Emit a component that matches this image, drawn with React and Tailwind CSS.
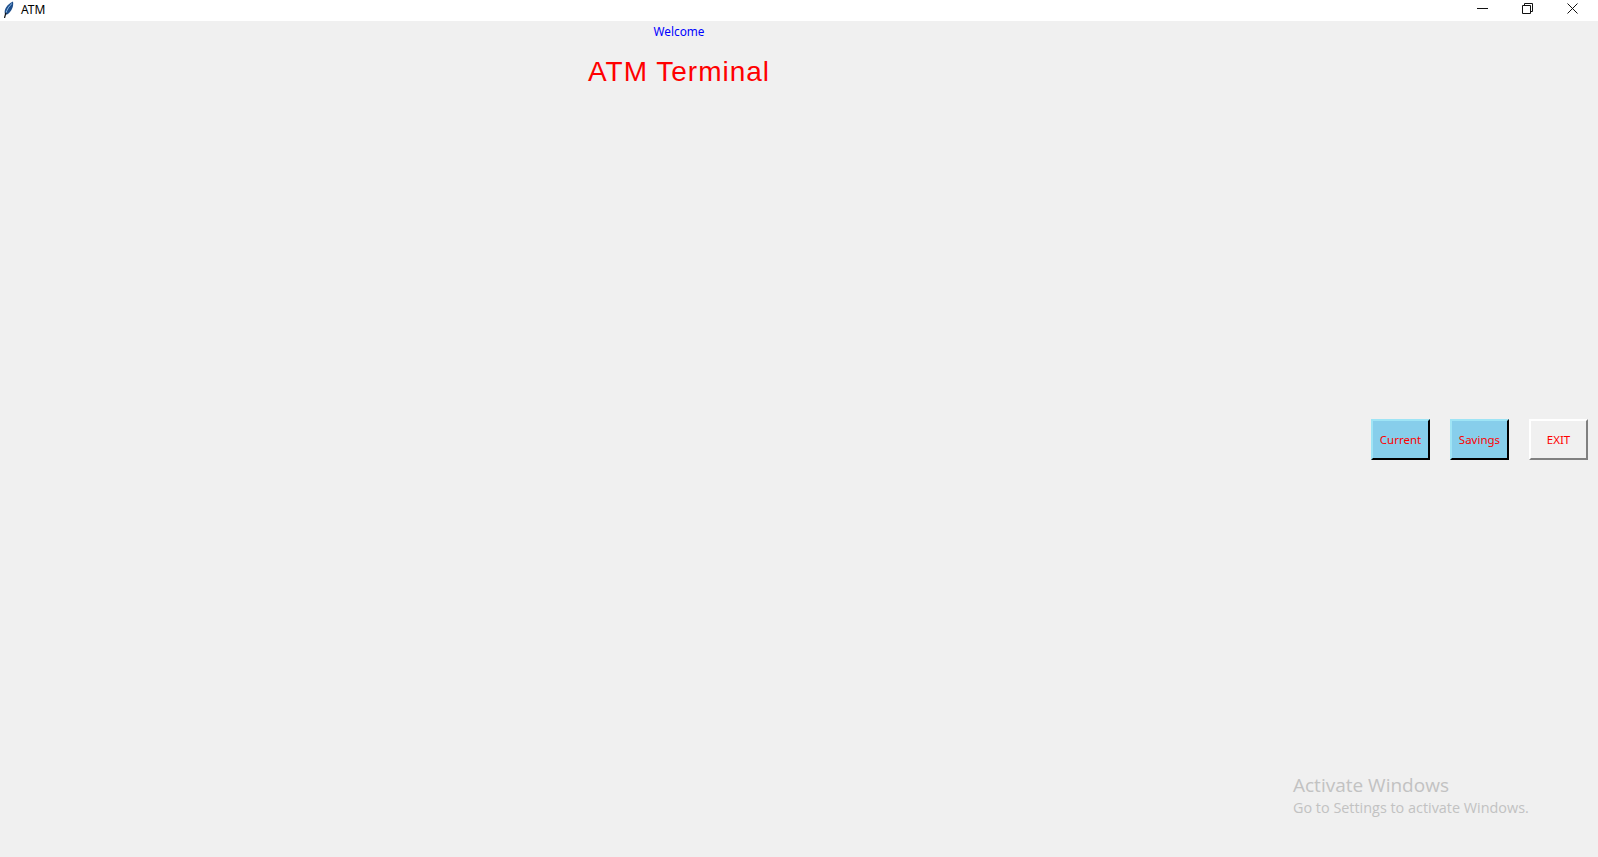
import React from 'react';

const WindowControls = () => (
  <div className="flex h-[17px] items-center self-start pr-[3px]">
    <button className="flex h-full w-[45px] items-center justify-center">
      <svg width="11" height="11" viewBox="0 0 11 11"><path d="M0 5.5h11" stroke="#111" strokeWidth="1" /></svg>
    </button>
    <button className="flex h-full w-[45px] items-center justify-center">
      <svg width="11" height="11" viewBox="0 0 11 11" fill="none" stroke="#111"><path d="M0.5 2.5h8v8h-8z" /><path d="M2.5 2.5v-2h8v8h-2" /></svg>
    </button>
    <button className="flex h-full w-[45px] items-center justify-center">
      <svg width="11" height="11" viewBox="0 0 11 11" stroke="#111"><path d="M0.5 0.5l10 10M10.5 0.5l-10 10" /></svg>
    </button>
  </div>
);

const Feather = () => (
  <svg width="11" height="17" viewBox="0 0 11 17" className="mb-[2px] ml-[3px]">
    <path d="M2 13.5 C0.5 9 3.5 3.5 10 0.5 C11 5 8.5 11 4 13.5 Z" fill="#1f4f8c" />
    <path d="M3 12 C4 8.5 6 5 9 2.5" stroke="#8dbbe8" strokeWidth="1" fill="none" />
    <path d="M1.5 17 L3 11.5" stroke="#111" strokeWidth="1.2" />
  </svg>
);

const AtmButton = ({ label, blue }) => (
  <button
    className={`h-[41px] w-[59px] text-[11.5px] leading-none text-[#ff0000] border-2 [font-family:'Noto_Sans',sans-serif] ${
      blue
        ? 'bg-[#87ceeb] border-t-[#9ee4f5] border-l-[#9ee4f5] border-r-[#000] border-b-[#000]'
        : 'bg-[#f0f0f0] border-t-[#fff] border-l-[#fff] border-r-[#808080] border-b-[#808080]'
    }`}
  >
    {label}
  </button>
);

export default function App() {
  return (
    <div className="relative flex h-[857px] w-[1598px] flex-col overflow-hidden bg-[#f0f0f0]">
      <div className="flex h-[21px] items-center justify-between bg-white">
        <div className="flex items-center">
          <Feather />
          <span className="mb-[2px] ml-[7px] text-[12px] text-black [font-family:'Noto_Sans',sans-serif]">ATM</span>
        </div>
        <WindowControls />
      </div>

      <div className="flex w-[1358px] flex-col items-center">
        <div className="mt-[2px] h-[17px] text-[11.8px] leading-[17px] text-[#0000ff] [font-family:'Noto_Sans',sans-serif]">Welcome</div>
        <div className="mt-[16px] h-[32px] text-[28px] leading-[32px] tracking-[1px] text-[#ff0000] [font-family:'Liberation_Sans',sans-serif]">ATM Terminal</div>
      </div>

      <div className="mt-[331px] flex justify-end gap-[20px] pr-[10px]">
        <AtmButton label="Current" blue />
        <AtmButton label="Savings" blue />
        <AtmButton label="EXIT" />
      </div>

      <div className="absolute left-[1293px] top-[772px] text-[#c2c2c2] [font-family:'Open_Sans',sans-serif]">
        <div className="text-[19px] leading-[26px]">Activate Windows</div>
        <div className="text-[14.4px] leading-[20px]">Go to Settings to activate Windows.</div>
      </div>
    </div>
  );
}
